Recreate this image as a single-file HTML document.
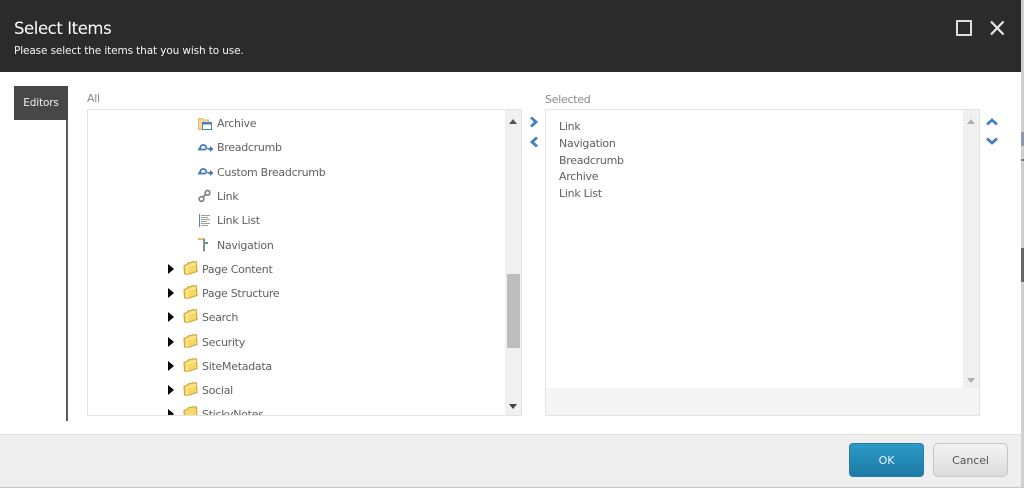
<!DOCTYPE html>
<html><head><meta charset="utf-8"><style>
*{box-sizing:border-box}
html,body{margin:0;padding:0;width:1024px;height:488px;overflow:hidden;background:#fff;font-family:"DejaVu Sans","Liberation Sans",sans-serif}
.a{position:absolute;white-space:nowrap}
.t{position:absolute;white-space:nowrap;font-size:11px;line-height:16px;margin-top:1px;color:#5f5f5f;letter-spacing:-.28px}
svg{position:absolute;display:block}
</style></head><body>
<div class="a" style="left:1021px;top:0;width:3px;height:488px;background:#cfcfcf"></div>
<div class="a" style="left:1021px;top:248px;width:3px;height:34px;background:#666"></div>
<div class="a" style="left:1021px;top:132px;width:3px;height:14px;background:#8a9bb0"></div>
<div class="a" style="left:1021px;top:159px;width:3px;height:2px;background:#777"></div>

<div class="a" style="left:0;top:0;width:1021px;height:72px;background:#2b2b2b"></div>
<div class="a" style="left:14px;top:18px;font-size:16.5px;line-height:22px;color:#fff;letter-spacing:-.42px">Select Items</div>
<div class="a" style="left:14px;top:43px;font-size:10.5px;line-height:16px;color:#f6f6f6;letter-spacing:-.12px">Please select the items that you wish to use.</div>
<svg style="left:956px;top:20px" width="16" height="16"><rect x="1" y="1" width="14" height="14" fill="none" stroke="#e0e0e0" stroke-width="2"/></svg>
<svg style="left:989px;top:20px" width="16" height="16"><path d="M2 1.500L14.500 14.500M14.500 1.500L2 14.500" stroke="#e8e8e8" stroke-width="2.200" fill="none"/></svg>

<div class="a" style="left:14px;top:86px;width:54px;height:34px;background:#474747;color:#f0f0f0;font-size:10.5px;line-height:35px;text-align:center;letter-spacing:-.15px">Editors</div>
<div class="a" style="left:66px;top:120px;width:2px;height:301px;background:#5a5a5a"></div>

<div class="t" style="left:87px;top:90px;color:#8a8a8a">All</div>
<div class="t" style="left:545px;top:91px;color:#8a8a8a">Selected</div>

<div class="a" style="left:87px;top:109px;width:435px;height:307px;border:1px solid #e3e3e3;background:#fff;overflow:hidden">
  <div class="a" style="right:0;top:0;width:16px;height:305px;background:#f0f0f0"></div>
  <div class="a" style="right:1px;top:164px;width:13px;height:74px;background:#bdbdbd"></div>
  <svg style="right:4px;top:9px" width="8" height="5"><path d="M4 0L8 5H0Z" fill="#555"/></svg>
  <svg style="right:4px;top:294px" width="8" height="5"><path d="M0 0H8L4 5Z" fill="#444"/></svg>
</div>

<svg style="left:198px;top:116px" width="16" height="15"><path d="M.5 2.500h4l1 1.500h5v3h-5v6.500h-5z" fill="#f6d7a5" stroke="#e8b66a"/><rect x="4.500" y="6.500" width="9" height="7" fill="#fff" stroke="#4d7fb8"/><rect x="4.500" y="6.500" width="9" height="2" fill="#4d7fb8"/></svg>
<div class="t" style="left:217px;top:115px">Archive</div>
<svg style="left:198px;top:141px" width="16" height="12"><path d="M2 8c0-5.500 6.500-5.500 6.500 0" fill="none" stroke="#3f78b8" stroke-width="1.800"/><path d="M0 8.500h8M9.500 8h4" stroke="#3f78b8" stroke-width="1.700"/><path d="M12 5l3.500 3-3.500 3z" fill="#3f78b8"/></svg>
<div class="t" style="left:217px;top:139px">Breadcrumb</div>
<svg style="left:198px;top:165px" width="16" height="12"><path d="M2 8c0-5.500 6.500-5.500 6.500 0" fill="none" stroke="#3f78b8" stroke-width="1.800"/><path d="M0 8.500h8M9.500 8h4" stroke="#3f78b8" stroke-width="1.700"/><path d="M12 5l3.500 3-3.500 3z" fill="#3f78b8"/></svg>
<div class="t" style="left:217px;top:164px">Custom Breadcrumb</div>
<svg style="left:198px;top:189px" width="13" height="14"><path d="M5 8l3-3" stroke="#777" stroke-width="1.600"/><circle cx="3.500" cy="10" r="2.300" fill="none" stroke="#808080" stroke-width="1.700"/><circle cx="9.500" cy="3.800" r="2.300" fill="none" stroke="#808080" stroke-width="1.700"/></svg>
<div class="t" style="left:217px;top:188px">Link</div>
<svg style="left:199px;top:214px" width="12" height="13"><path d="M.5 0v13" stroke="#5b86b5"/><path d="M2 1.500h9M2 3.500h7M2 5.500h9M2 7.500h6M2 9.500h9M2 11.500h7" stroke="#a0a0a0"/></svg>
<div class="t" style="left:217px;top:212px">Link List</div>
<svg style="left:198px;top:238px" width="14" height="14"><path d="M6 .5v13" stroke="#666" stroke-width="1.500"/><path d="M0 1h5" stroke="#e7b86a" stroke-width="2"/><path d="M7 4h3v2h-3z" fill="#4a9a80"/></svg>
<div class="t" style="left:217px;top:237px">Navigation</div>

<svg style="left:168px;top:264px" width="6" height="10"><path d="M0 0L6 5 0 10Z" fill="#000"/></svg>
<svg style="left:183px;top:261px" width="15" height="15"><path d="M1 4.500L4 3.500 5 2 10.500 .8 13.500 1 14 10.500 4.500 13.500 1.500 13Z" fill="#f7d766" stroke="#c6a02e"/><path d="M4.500 13.500L4 5.500 13.500 2.500" fill="none" stroke="#fff2b0"/></svg>
<div class="t" style="left:202px;top:261px">Page Content</div>

<svg style="left:168px;top:288px" width="6" height="10"><path d="M0 0L6 5 0 10Z" fill="#000"/></svg>
<svg style="left:183px;top:285px" width="15" height="15"><path d="M1 4.500L4 3.500 5 2 10.500 .8 13.500 1 14 10.500 4.500 13.500 1.500 13Z" fill="#f7d766" stroke="#c6a02e"/><path d="M4.500 13.500L4 5.500 13.500 2.500" fill="none" stroke="#fff2b0"/></svg>
<div class="t" style="left:202px;top:285px">Page Structure</div>

<svg style="left:168px;top:312px" width="6" height="10"><path d="M0 0L6 5 0 10Z" fill="#000"/></svg>
<svg style="left:183px;top:309px" width="15" height="15"><path d="M1 4.500L4 3.500 5 2 10.500 .8 13.500 1 14 10.500 4.500 13.500 1.500 13Z" fill="#f7d766" stroke="#c6a02e"/><path d="M4.500 13.500L4 5.500 13.500 2.500" fill="none" stroke="#fff2b0"/></svg>
<div class="t" style="left:202px;top:309px">Search</div>

<svg style="left:168px;top:337px" width="6" height="10"><path d="M0 0L6 5 0 10Z" fill="#000"/></svg>
<svg style="left:183px;top:334px" width="15" height="15"><path d="M1 4.500L4 3.500 5 2 10.500 .8 13.500 1 14 10.500 4.500 13.500 1.500 13Z" fill="#f7d766" stroke="#c6a02e"/><path d="M4.500 13.500L4 5.500 13.500 2.500" fill="none" stroke="#fff2b0"/></svg>
<div class="t" style="left:202px;top:334px">Security</div>

<svg style="left:168px;top:361px" width="6" height="10"><path d="M0 0L6 5 0 10Z" fill="#000"/></svg>
<svg style="left:183px;top:358px" width="15" height="15"><path d="M1 4.500L4 3.500 5 2 10.500 .8 13.500 1 14 10.500 4.500 13.500 1.500 13Z" fill="#f7d766" stroke="#c6a02e"/><path d="M4.500 13.500L4 5.500 13.500 2.500" fill="none" stroke="#fff2b0"/></svg>
<div class="t" style="left:202px;top:358px">SiteMetadata</div>

<svg style="left:168px;top:385px" width="6" height="10"><path d="M0 0L6 5 0 10Z" fill="#000"/></svg>
<svg style="left:183px;top:382px" width="15" height="15"><path d="M1 4.500L4 3.500 5 2 10.500 .8 13.500 1 14 10.500 4.500 13.500 1.500 13Z" fill="#f7d766" stroke="#c6a02e"/><path d="M4.500 13.500L4 5.500 13.500 2.500" fill="none" stroke="#fff2b0"/></svg>
<div class="t" style="left:202px;top:382px">Social</div>

<div class="a" style="left:160px;top:405px;width:340px;height:10px;overflow:hidden">
  <svg style="left:8px;top:4px" width="6" height="10"><path d="M0 0L6 5 0 10Z" fill="#000"/></svg>
  <svg style="left:23px;top:1px" width="15" height="15"><path d="M1 4.500L4 3.500 5 2 10.500 .8 13.500 1 14 10.500 4.500 13.500 1.500 13Z" fill="#f7d766" stroke="#c6a02e"/></svg>
  <div class="t" style="left:42px;top:1px">StickyNotes</div>
</div>

<svg style="left:529px;top:116px" width="10" height="12"><path d="M2 1.500L7 6 2 10.500" fill="none" stroke="#3f7fbf" stroke-width="2.800"/></svg>
<svg style="left:529px;top:136px" width="10" height="12"><path d="M8 1.500L3 6 8 10.500" fill="none" stroke="#3f7fbf" stroke-width="2.800"/></svg>

<div class="a" style="left:545px;top:109px;width:435px;height:307px;border:1px solid #e3e3e3;background:#f5f5f5">
  <div class="a" style="left:0;top:0;width:417px;height:278px;background:#fff"></div>
  <div class="a" style="left:417px;top:0;width:16px;height:278px;background:#f0f0f0"></div>
  <svg style="left:421px;top:9px" width="8" height="5"><path d="M4 0L8 5H0Z" fill="#b0b0b0"/></svg>
  <svg style="left:421px;top:268px" width="8" height="5"><path d="M0 0H8L4 5Z" fill="#b0b0b0"/></svg>
</div>
<div class="t" style="left:559px;top:118px">Link</div>
<div class="t" style="left:559px;top:135px">Navigation</div>
<div class="t" style="left:559px;top:152px">Breadcrumb</div>
<div class="t" style="left:559px;top:168px">Archive</div>
<div class="t" style="left:559px;top:185px">Link List</div>

<svg style="left:985px;top:117px" width="14" height="10"><path d="M2 7.500L7 3l5 4.500" fill="none" stroke="#3f7fbf" stroke-width="2.800"/></svg>
<svg style="left:985px;top:136px" width="14" height="10"><path d="M2 2.500L7 7l5-4.500" fill="none" stroke="#3f7fbf" stroke-width="2.800"/></svg>

<div class="a" style="left:0;top:434px;width:1021px;height:53px;background:#efefef;border-top:1px solid #e0e0e0"></div>
<div class="a" style="left:0;top:487px;width:1024px;height:1px;background:#c8c8c8"></div>
<div class="a" style="left:849px;top:443px;width:75px;height:34px;border-radius:4px;background:linear-gradient(#2b9ac6,#1c7ba6);border:1px solid #1f80ab;color:#eaf6fb;font-size:11px;line-height:34px;text-align:center">OK</div>
<div class="a" style="left:933px;top:443px;width:75px;height:34px;border-radius:5px;background:linear-gradient(#f3f3f3,#dcdcdc);border:1px solid #c6c6c6;color:#555;font-size:11px;line-height:34px;text-align:center;letter-spacing:-.1px">Cancel</div>
</body></html>
